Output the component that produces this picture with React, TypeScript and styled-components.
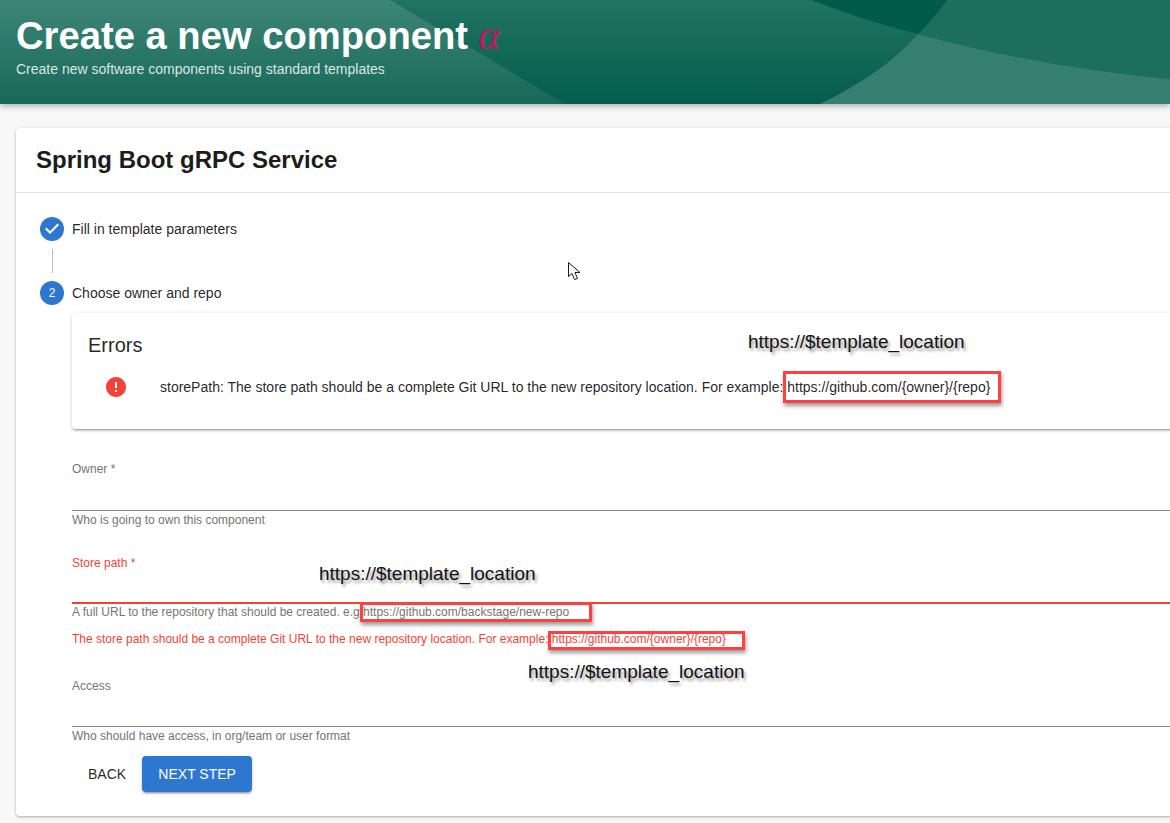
import React from "react";
import styled, { createGlobalStyle } from "styled-components";

const GlobalStyle = createGlobalStyle`
  html, body {
    margin: 0;
    height: 100%;
    overflow: hidden;
    background: #f8f8f8;
  }
  body {
    font-family: "Liberation Sans", Arial, sans-serif;
    color: rgba(0, 0, 0, 0.87);
  }
`;

const Page = styled.div`
  position: relative;
  width: 1170px;
  height: 823px;
  overflow: hidden;
`;

const Header = styled.header`
  position: relative;
  height: 104px;
  box-sizing: border-box;
  padding: 14px 16px 0;
  box-shadow: 0 2px 6px rgba(0, 0, 0, 0.3);
  overflow: hidden;
`;

const Waves = styled.svg`
  position: absolute;
  inset: 0;
`;

const Title = styled.h1`
  position: relative;
  margin: 0;
  font-size: 38.2px;
  line-height: 42px;
  font-weight: 700;
  color: #fff;
`;

const Alpha = styled.span`
  font-family: "Liberation Serif", serif;
  font-size: 42px;
  font-style: italic;
  font-weight: 400;
  color: #c2185b;
`;

const Subtitle = styled.p`
  position: relative;
  margin: 4px 0 0;
  font-size: 14px;
  line-height: 16px;
  color: rgba(255, 255, 255, 0.85);
`;

const Main = styled.main`
  padding: 24px 0 0 16px;
`;

const Card = styled.section`
  width: 1300px;
  background: #fff;
  border-radius: 4px;
  box-shadow: 0 1px 3px rgba(0, 0, 0, 0.3);
`;

const CardHeader = styled.div`
  height: 65px;
  box-sizing: border-box;
  padding: 16px 20px;
  border-bottom: 1px solid #e2e2e2;
  font-size: 24px;
  line-height: 32px;
  font-weight: 700;
  color: #1c1c1c;
`;

const Stepper = styled.div`
  padding: 24px 24px 24px;
`;

const StepRow = styled.div`
  display: flex;
  align-items: center;
  gap: 8px;
  height: 24px;
  font-size: 14px;
`;

const StepBadge = styled.span`
  display: flex;
  align-items: center;
  justify-content: center;
  width: 24px;
  height: 24px;
  border-radius: 50%;
  background: #2e77d0;
  color: #fff;
  font-size: 12px;
`;

const Connector = styled.div`
  width: 1px;
  height: 24px;
  margin: 8px 0 8px 12px;
  background: #bdbdbd;
`;

const StepContent = styled.div`
  margin: 8px 0 0 32px;
`;

const ErrorCard = styled.div`
  box-sizing: border-box;
  height: 116px;
  padding: 16px;
  border-radius: 4px;
  box-shadow: 0 3px 1px -2px rgba(0, 0, 0, 0.2), 0 2px 2px rgba(0, 0, 0, 0.14),
    0 1px 5px rgba(0, 0, 0, 0.12);
`;

const ErrorTitle = styled.h2`
  margin: 0;
  font-size: 20px;
  line-height: 32px;
  font-weight: 400;
`;

const ErrorItem = styled.div`
  display: flex;
  align-items: center;
  height: 24px;
  margin-top: 14px;
  padding-left: 16px;
  font-size: 14px;
`;

const ErrorIcon = styled.svg`
  flex: 0 0 56px;
  width: 24px;
  height: 24px;
  fill: #f44336;
`;

const Field = styled.div<{ $gap: number }>`
  margin-top: ${(p) => p.$gap}px;
`;

const Label = styled.label<{ $error?: boolean }>`
  display: block;
  font-size: 12px;
  line-height: 14px;
  color: ${(p) => (p.$error ? "#f44336" : "#757575")};
`;

const Underline = styled.div<{ $error?: boolean; $height: number }>`
  box-sizing: border-box;
  height: ${(p) => p.$height}px;
  border-bottom: ${(p) => (p.$error ? "2px solid #f44336" : "1px solid #8c8c8c")};
`;

const Helper = styled.p<{ $error?: boolean; $top: number }>`
  margin: ${(p) => p.$top}px 0 0;
  font-size: 12px;
  line-height: 14px;
  white-space: nowrap;
  color: ${(p) => (p.$error ? "#f44336" : "#757575")};
`;

const Actions = styled.div`
  display: flex;
  align-items: center;
  gap: 16px;
  margin-top: 13px;
  padding-left: 16px;
`;

const BackButton = styled.button`
  padding: 0;
  border: 0;
  background: none;
  font: 400 14px/36px "Liberation Sans", Arial, sans-serif;
  color: rgba(0, 0, 0, 0.87);
`;

const NextButton = styled.button`
  width: 110px;
  height: 36px;
  padding: 0;
  border: 0;
  border-radius: 4px;
  background: #2e77d0;
  font: 400 14px/36px "Liberation Sans", Arial, sans-serif;
  color: #fff;
  box-shadow: 0 3px 1px -2px rgba(0, 0, 0, 0.2), 0 2px 2px rgba(0, 0, 0, 0.14),
    0 1px 5px rgba(0, 0, 0, 0.12);
`;

// the pasted annotations of the screenshot, laid over the form
const Note = styled.span<{ $x: number; $y: number }>`
  position: absolute;
  left: ${(p) => p.$x}px;
  top: ${(p) => p.$y}px;
  font-size: 19px;
  line-height: 22px;
  white-space: nowrap;
  color: #111;
  text-shadow: 2px 3px 3px rgba(0, 0, 0, 0.4);
`;

const Mark = styled.div<{ $x: number; $y: number; $w: number; $h: number }>`
  position: absolute;
  left: ${(p) => p.$x}px;
  top: ${(p) => p.$y}px;
  width: ${(p) => p.$w}px;
  height: ${(p) => p.$h}px;
  box-sizing: border-box;
  border: 3px solid #ff4040;
  box-shadow: 1px 3px 4px rgba(0, 0, 0, 0.4);
`;

const Cursor = styled.svg`
  position: absolute;
  left: 567px;
  top: 261px;
`;

function HeaderWaves() {
  return (
    <Waves width="1170" height="104" viewBox="0 0 1170 104">
      <defs>
        <linearGradient id="mid" x1="0" y1="0" x2="0" y2="1">
          <stop offset="0" stopColor="#217362" />
          <stop offset="1" stopColor="#055d4d" />
        </linearGradient>
        <linearGradient id="light" x1="0" y1="0" x2="0" y2="1">
          <stop offset="0" stopColor="#fff" stopOpacity="0.13" />
          <stop offset="1" stopColor="#fff" stopOpacity="0.07" />
        </linearGradient>
      </defs>
      <rect width="1170" height="104" fill="#005b4b" />
      <path d="M0 0H811Q865 21 918 34Q885 72 820 104H0Z" fill="url(#mid)" />
      <path d="M0 0H390L565 104H0Z" fill="url(#light)" />
      <path d="M947 0H1170V79Q1040 67 918 34Q935 17 947 0Z" fill="#1c6e5f" />
      <path d="M918 34Q1040 67 1170 79V104H820Q885 72 918 34Z" fill="#367e71" />
    </Waves>
  );
}

export default function App() {
  return (
    <Page>
      <GlobalStyle />
      <Header>
        <HeaderWaves />
        <Title>
          Create a new component <Alpha>α</Alpha>
        </Title>
        <Subtitle>Create new software components using standard templates</Subtitle>
      </Header>
      <Main>
        <Card>
          <CardHeader>Spring Boot gRPC Service</CardHeader>
          <Stepper>
            <StepRow>
              <StepBadge>
                <svg width="24" height="24" viewBox="0 0 24 24" fill="#fff">
                  <path d="M10 17l-5-5 1.4-1.4 3.6 3.6 7.6-7.6L19 8l-9 9z" />
                </svg>
              </StepBadge>
              Fill in template parameters
            </StepRow>
            <Connector />
            <StepRow>
              <StepBadge>2</StepBadge>
              Choose owner and repo
            </StepRow>
            <StepContent>
              <ErrorCard>
                <ErrorTitle>Errors</ErrorTitle>
                <ErrorItem>
                  <ErrorIcon viewBox="0 0 24 24" preserveAspectRatio="xMinYMid meet">
                    <path d="M12 2C6.48 2 2 6.48 2 12s4.48 10 10 10 10-4.48 10-10S17.52 2 12 2zm1 15h-2v-2h2v2zm0-4h-2V7h2v6z" />
                  </ErrorIcon>
                  storePath: The store path should be a complete Git URL to the new repository location. For example: https://github.com/{"{owner}"}/{"{repo}"}
                </ErrorItem>
              </ErrorCard>
              <Field $gap={33}>
                <Label>Owner *</Label>
                <Underline $height={35} />
                <Helper $top={2}>Who is going to own this component</Helper>
              </Field>
              <Field $gap={29}>
                <Label $error>Store path *</Label>
                <Underline $error $height={34} />
                <Helper $top={1}>
                  A full URL to the repository that should be created. e.g https://github.com/backstage/new-repo
                </Helper>
                <Helper $error $top={13}>
                  The store path should be a complete Git URL to the new repository location. For example: https://github.com/{"{owner}"}/{"{repo}"}
                </Helper>
              </Field>
              <Field $gap={33}>
                <Label>Access</Label>
                <Underline $height={34} />
                <Helper $top={2}>Who should have access, in org/team or user format</Helper>
              </Field>
              <Actions>
                <BackButton>BACK</BackButton>
                <NextButton>NEXT STEP</NextButton>
              </Actions>
            </StepContent>
          </Stepper>
        </Card>
      </Main>

      <Note $x={748} $y={331}>https://$template_location</Note>
      <Note $x={319} $y={563}>https://$template_location</Note>
      <Note $x={528} $y={661}>https://$template_location</Note>
      <Mark $x={783} $y={371} $w={218} $h={32} />
      <Mark $x={360} $y={602} $w={232} $h={20} />
      <Mark $x={548} $y={631} $w={197} $h={19} />
      <Cursor width="16" height="22" viewBox="0 0 16 22">
        <path
          d="M1.5 1.5V15.5L5 12.5L7.5 18.5L10.5 17.5L8 11.5H13Z"
          fill="#fff"
          stroke="#1a1a2a"
          strokeWidth="1"
        />
      </Cursor>
    </Page>
  );
}
